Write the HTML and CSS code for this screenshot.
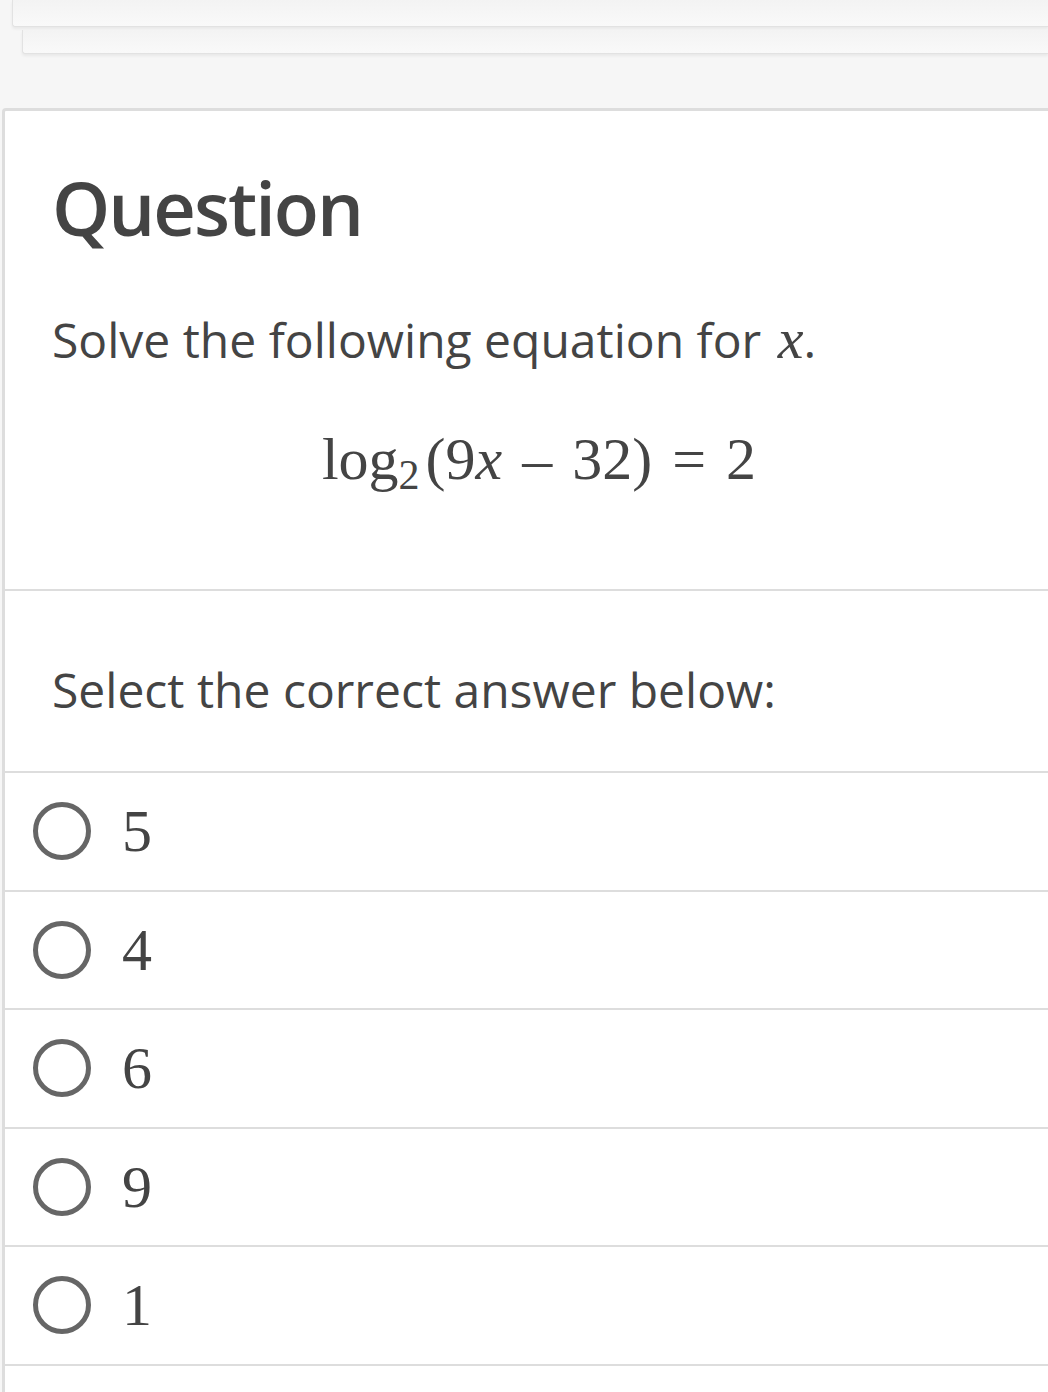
FILE: index.html
```html
<!DOCTYPE html>
<html lang="en">
<head>
    <meta charset="UTF-8">
    <meta name="viewport" content="width=device-width, initial-scale=1.0">
    <title>Question</title>
    <link rel="stylesheet" href="styles.css">
</head>
<body>
    <div class="stack">
        <div class="stack-card first"></div>
        <div class="stack-card second"></div>
    </div>

    <div class="card">
        <div class="question">
            <h1>Question</h1>
            <p class="prompt">Solve the following equation for <span class="math"><i>x</i></span>.</p>
            <div class="equation math">
                log<sub>2</sub>(9<i>x</i><span class="op">&ndash;</span>32)<span class="op">=</span>2
            </div>
        </div>

        <div class="instruction">Select the correct answer below:</div>

        <ul class="answers">
            <li class="answer"><span class="radio"></span><span class="value math">5</span></li>
            <li class="answer"><span class="radio"></span><span class="value math">4</span></li>
            <li class="answer"><span class="radio"></span><span class="value math">6</span></li>
            <li class="answer"><span class="radio"></span><span class="value math">9</span></li>
            <li class="answer"><span class="radio"></span><span class="value math">1</span></li>
        </ul>
    </div>
</body>
</html>
```

FILE: styles.css
```css
body {
    font-family: "Open Sans", Arial, sans-serif;
    margin: 0;
    padding: 0;
    background: #f6f6f6;
    color: #444;
    overflow: hidden;
    height: 1392px;
}
.stack {
    height: 108px;
}
.stack-card {
    height: 26px;
    background: linear-gradient(#f3f3f3, #f9f9f9);
    border: 1px solid #e2e2e2;
    border-top: none;
    border-right: none;
    border-radius: 0 0 0 3px;
    box-shadow: 0 2px 3px rgba(0, 0, 0, 0.06);
}
.stack-card.first {
    margin-left: 12px;
}
.stack-card.second {
    margin-left: 22px;
    margin-top: 3px;
    height: 23px;
}
.card {
    width: 1100px;
    min-height: 1290px;
    margin-left: 2px;
    background: #fff;
    border: 3px solid #ddd;
    border-right: none;
    border-bottom: none;
    border-radius: 4px 0 0 0;
}
.math {
    font-family: "Liberation Serif", "Times New Roman", serif;
}
.math i {
    font-style: italic;
}
.question {
    padding: 53px 79px 95px 47px;
    border-bottom: 2px solid #ddd;
}
h1 {
    margin: 0;
    font-size: 74px;
    font-weight: 600;
    line-height: 1.2;
    letter-spacing: -2px;
    color: #444;
}
.prompt {
    margin: 53px 0 0;
    font-size: 48px;
    line-height: 1.4;
}
.prompt .math {
    font-size: 58px;
    line-height: 1;
    margin-left: 4px;
}
.equation {
    margin-top: 52px;
    text-align: center;
    font-size: 60px;
    line-height: 1.15;
}
.equation sub {
    font-size: 0.7em;
    vertical-align: -0.25em;
    line-height: 0;
    margin-right: 6px;
}
.equation .op {
    margin: 0 20px;
}
.instruction {
    padding: 65px 0 48px 47px;
    font-size: 48px;
    line-height: 1.4;
    border-bottom: 2px solid #ddd;
}
.answers {
    list-style: none;
    margin: 0;
    padding: 0;
}
.answer {
    display: flex;
    align-items: center;
    gap: 31px;
    height: 116.5px;
    padding-left: 28px;
    border-bottom: 2px solid #ddd;
}
.radio {
    width: 48px;
    height: 48px;
    border: 5px solid #666;
    border-radius: 50%;
}
.value {
    font-size: 60px;
    line-height: 1.2;
}
```
